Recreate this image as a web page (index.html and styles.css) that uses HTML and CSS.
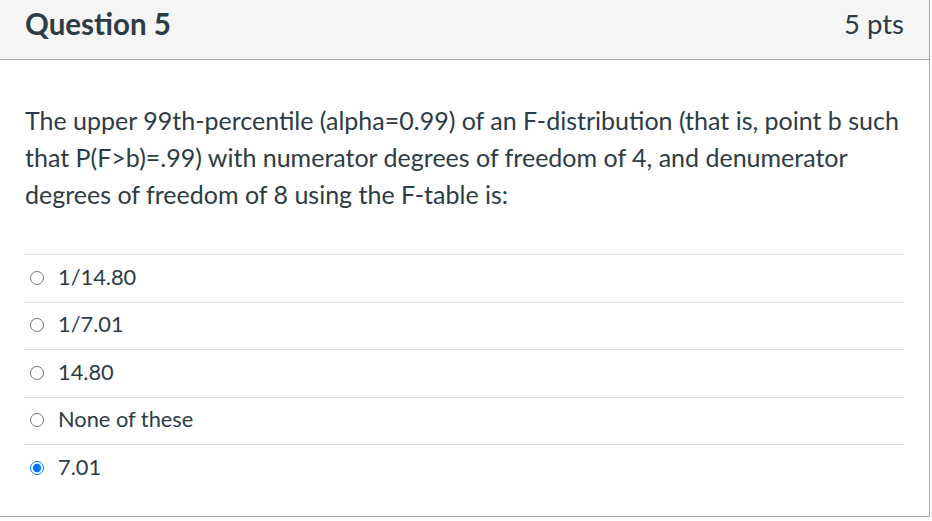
FILE: index.html
```html
<!DOCTYPE html>
<html>
<head>
<meta charset="utf-8">
<link rel="stylesheet" href="styles.css">
</head>
<body>
<div class="question">
  <div class="header">
    <span class="title">Question 5</span>
    <span class="pts">5 pts</span>
  </div>
  <div class="body">
    <p class="text">The upper 99th-percentile (alpha=0.99) of an F-distribution (that is, point b such that P(F&gt;b)=.99) with numerator degrees of freedom of 4, and denumerator degrees of freedom of 8 using the F-table is:</p>
    <div class="answers">
      <label class="answer"><input type="radio" name="a"><span>1/14.80</span></label>
      <label class="answer"><input type="radio" name="a"><span>1/7.01</span></label>
      <label class="answer"><input type="radio" name="a"><span>14.80</span></label>
      <label class="answer"><input type="radio" name="a"><span>None of these</span></label>
      <label class="answer"><input type="radio" name="a" checked><span>7.01</span></label>
    </div>
  </div>
</div>
</body>
</html>
```
FILE: styles.css
```css
html, body {
  margin: 0;
  padding: 0;
  background: #fff;
}
.question {
  width: 929px;
  height: 516px;
  border-right: 1px solid #a5a5a5;
  border-bottom: 1px solid #a5a5a5;
  font-family: Lato, "Liberation Sans", sans-serif;
  color: #2d3b45;
  box-sizing: content-box;
}
.header {
  background: #f5f5f5;
  border-bottom: 1px solid #a5a5a5;
  display: flex;
  align-items: center;
  justify-content: space-between;
  padding: 0 25px 12px 25px;
  box-sizing: border-box;
  height: 60px;
}
.title {
  font-weight: bold;
  font-size: 29.5px;
}
.pts {
  font-size: 27.5px;
}
.body {
  padding: 0 25px 0 24px;
}
.text {
  margin: 0;
  padding: 42px 0 41px 1px;
  font-size: 25px;
  line-height: 37px;
}
.answers {
  display: flex;
  flex-direction: column;
}
.answer {
  display: flex;
  align-items: center;
  height: 47.5px;
  border-top: 1px solid #dcdcdc;
  box-sizing: border-box;
  font-size: 21.8px;
  padding-bottom: 4px;
}
.answer input {
  margin: 3px 14px 0 6px;
  width: 14px;
  height: 14px;
}
```
